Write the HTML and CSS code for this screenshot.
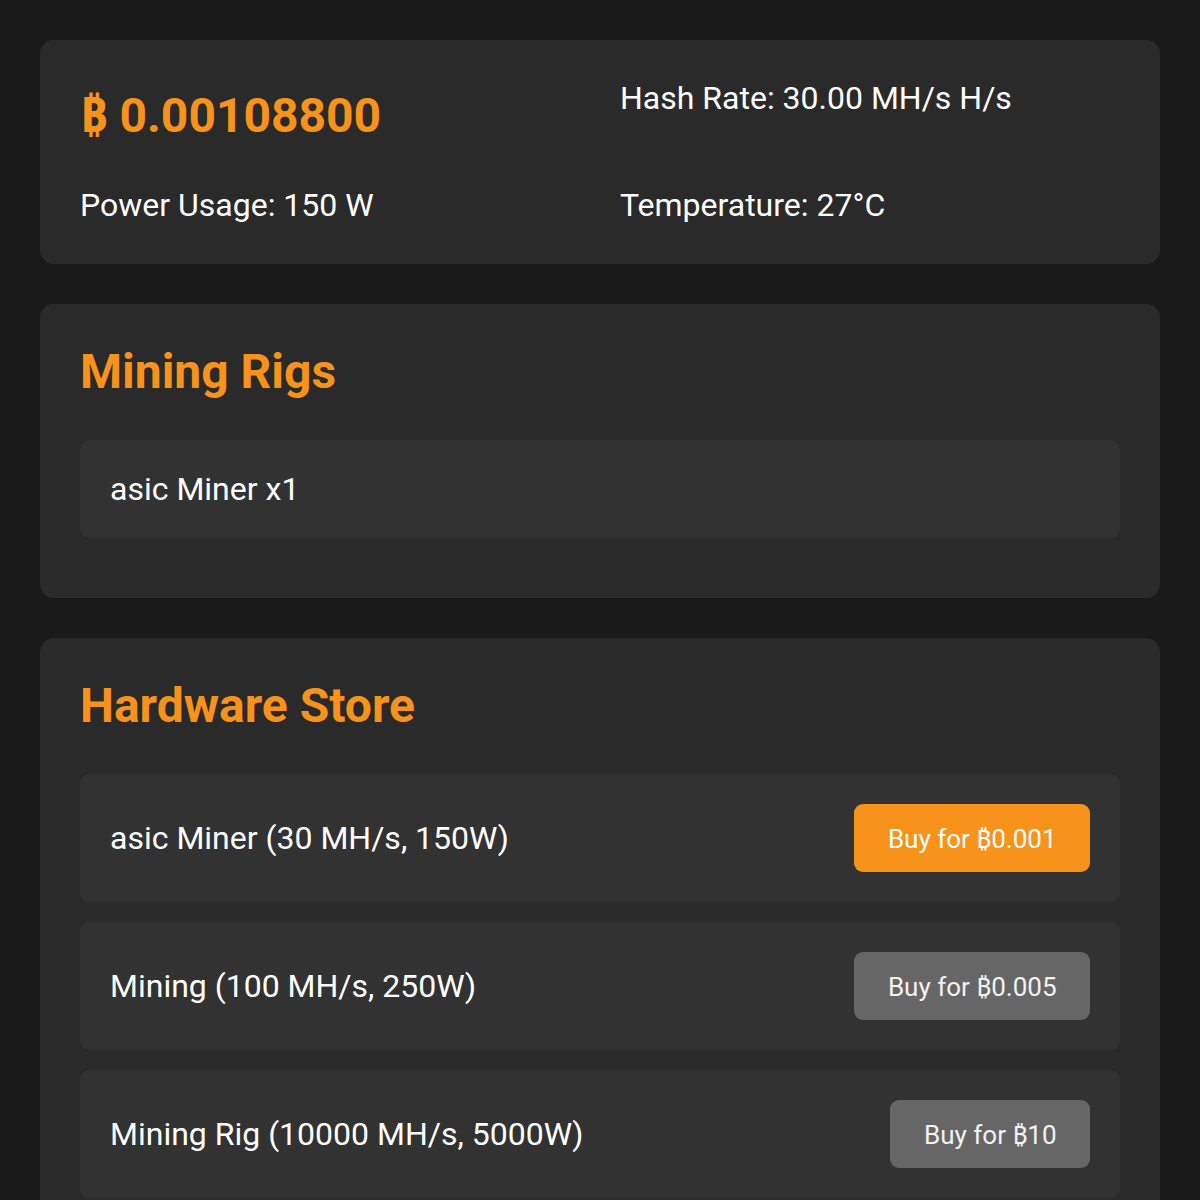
FILE: index.html
```html
<!DOCTYPE html>
<html>
<head>
<meta charset="utf-8">
<link rel="stylesheet" href="styles.css">
</head>
<body>
<div class="page">
  <section class="card stats">
    <div class="balance">₿ 0.00108800</div>
    <div class="stat">Hash Rate: 30.00 MH/s H/s</div>
    <div class="stat">Power Usage: 150 W</div>
    <div class="stat">Temperature: 27°C</div>
  </section>

  <section class="card">
    <h2 class="title">Mining Rigs</h2>
    <div class="item rig">asic Miner x1</div>
  </section>

  <section class="card">
    <h2 class="title">Hardware Store</h2>
    <div class="item shop">
      <span class="label">asic Miner (30 MH/s, 150W)</span>
      <button class="btn btn-buy">Buy for ₿0.001</button>
    </div>
    <div class="item shop">
      <span class="label">Mining (100 MH/s, 250W)</span>
      <button class="btn btn-off">Buy for ₿0.005</button>
    </div>
    <div class="item shop">
      <span class="label">Mining Rig (10000 MH/s, 5000W)</span>
      <button class="btn btn-off">Buy for ₿10</button>
    </div>
  </section>
</div>
</body>
</html>
```

FILE: styles.css
```css
html, body {
  margin: 0;
  padding: 0;
  background: #1a1a1a;
  color: #ffffff;
  font-family: Roboto, "Noto Sans", "Liberation Sans", sans-serif;
}

.page {
  padding: 40px;
  display: flex;
  flex-direction: column;
  gap: 40px;
}

.card {
  background: #2a2a2a;
  border-radius: 14px;
  padding: 40px;
}

.stats {
  display: grid;
  grid-template-columns: 1fr 1fr;
  column-gap: 40px;
  row-gap: 43px;
  align-items: start;
}

.balance {
  font-size: 48px;
  font-weight: 700;
  color: #f7931a;
  line-height: 56px;
  padding-top: 8px;
}

.stat {
  font-size: 32px;
  line-height: 37px;
}

.title {
  margin: 0 0 40px 0;
  font-size: 48px;
  font-weight: 700;
  color: #f7931a;
  line-height: 56px;
}

.item {
  background: #323232;
  border-radius: 9px;
  padding: 30px;
  margin-bottom: 20px;
  font-size: 32px;
  line-height: 38px;
}

.shop {
  display: flex;
  align-items: center;
  justify-content: space-between;
}

.btn {
  font-family: Roboto, "Noto Sans", "Liberation Sans", sans-serif;
  font-size: 26px;
  height: 68px;
  padding: 0 33.5px;
  border: none;
  border-radius: 9px;
  color: #ffffff;
}

.btn-buy {
  background: #f7931a;
}

.btn-off {
  background: #666666;
  color: #f2f2f2;
}
```
